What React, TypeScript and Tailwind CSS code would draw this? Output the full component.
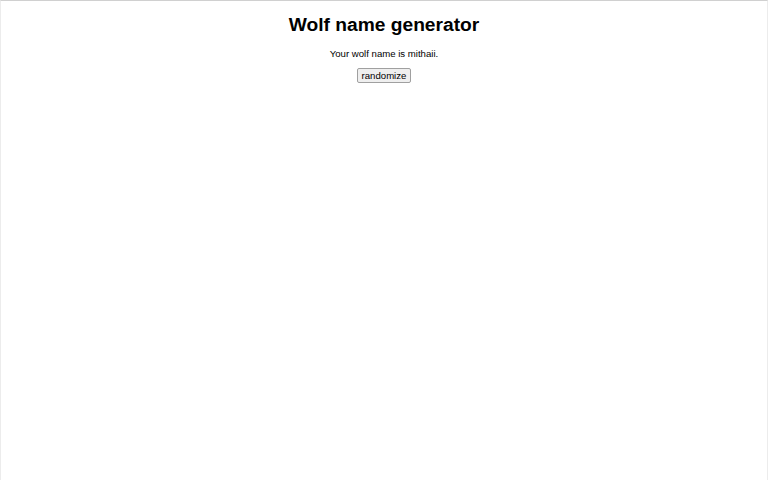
import { useState } from 'react';

const names = ['mithaii', 'greyfang', 'ashpaw', 'nightrun', 'silvermoon'];

export default function App() {
    const [name, setName] = useState('mithaii');

    const randomize = () => {
        setName(names[Math.floor(Math.random() * names.length)]);
    };

    return (
        <div className="h-[480px] w-[768px] border-t border-l border-r border-t-[#d0d0d0] border-l-[#ececec] border-r-[#ececec] bg-white font-['Liberation_Sans',Arial,sans-serif] text-black">
            <div className="flex flex-col items-center pt-[13px]">
                <h1 className="text-[19.2px] font-bold leading-[22px]">Wolf name generator</h1>
                <p className="mt-[12px] text-[9.6px] leading-[11px]">Your wolf name is {name}.</p>
                <button
                    type="button"
                    onClick={randomize}
                    className="mt-[9px] rounded-[2px] border border-[#a0a0a0] bg-[#efefef] px-[4px] py-[1px] text-[9.6px] leading-[11px]"
                >
                    randomize
                </button>
            </div>
        </div>
    );
}
